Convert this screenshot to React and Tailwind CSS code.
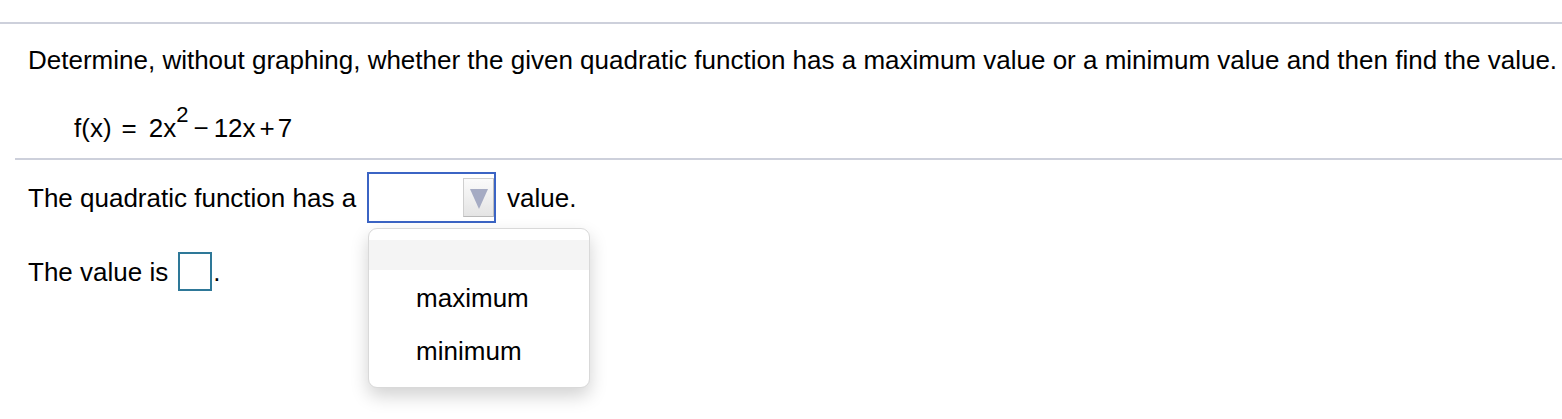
export default function App() {
  const font = { fontFamily: '"Liberation Sans", Arial, Helvetica, sans-serif' };
  return (
    <div className="w-[1562px] h-[419px] bg-white text-black relative overflow-hidden" style={font}>
      <div className="h-[22px]" />
      <div className="border-t-2 border-[#cdd0db]" />
      <div className="pl-[28px] pt-[21px] text-[26px] leading-[30px] whitespace-nowrap">
        Determine, without graphing, whether the given quadratic function has a maximum value or a minimum value and then find the value.
      </div>
      <div className="pl-[74px] mt-[38px] text-[26px] leading-[30px] whitespace-nowrap flex items-start h-[30px]">
        <span>f(x)</span>
        <span className="ml-[10px]">=</span>
        <span className="ml-[12px]">2x</span>
        <span className="relative -top-[13px] text-[22px] leading-[30px]">2</span>
        <span className="ml-[5px]">−</span>
        <span className="ml-[5px]">12x</span>
        <span className="ml-[4px]">+</span>
        <span className="ml-[3px]">7</span>
      </div>
      <div className="ml-[15px] mt-[15px] border-t-2 border-[#cdd0db]" />
      <div className="pl-[28px] mt-[12px] flex items-center text-[26px] leading-[30px] whitespace-nowrap">
        <span>The quadratic function has a</span>
        <div className="relative ml-[11px] w-[129px] h-[51px] border-2 border-[#3b64c4] bg-white">
          <div className="absolute right-0 top-[4px] w-[31px] h-[39px] bg-gradient-to-b from-[#fbfbfb] to-[#e4e4e4] border border-[#cfcfcf] border-b-[#b9b9b9] border-r-[#bdbdbd] flex items-center justify-center">
            <svg width="20" height="22" viewBox="0 0 20 22">
              <polygon points="1,2 19,2 10,22" fill="#a5abc3" />
            </svg>
          </div>
          <div className="absolute left-[-1px] top-[54px] w-[222px] h-[160px] bg-white rounded-[9px] border border-[#d9d9d9] shadow-[0_8px_18px_rgba(0,0,0,0.18)] z-10 overflow-hidden">
            <div className="mt-[11px] h-[30px] bg-[#f4f4f4]" />
            <div className="pl-[47px] pt-[13px] text-[26px] leading-[30px]">maximum</div>
            <div className="pl-[47px] mt-[23px] text-[26px] leading-[30px]">minimum</div>
          </div>
        </div>
        <span className="ml-[11px]">value.</span>
      </div>
      <div className="pl-[28px] mt-[29px] flex items-center text-[26px] leading-[30px] whitespace-nowrap">
        <span>The value is</span>
        <div className="ml-[10px] w-[34px] h-[39px] border-2 border-[#2e7898]" />
        <span className="ml-[1px]">.</span>
      </div>
    </div>
  );
}
